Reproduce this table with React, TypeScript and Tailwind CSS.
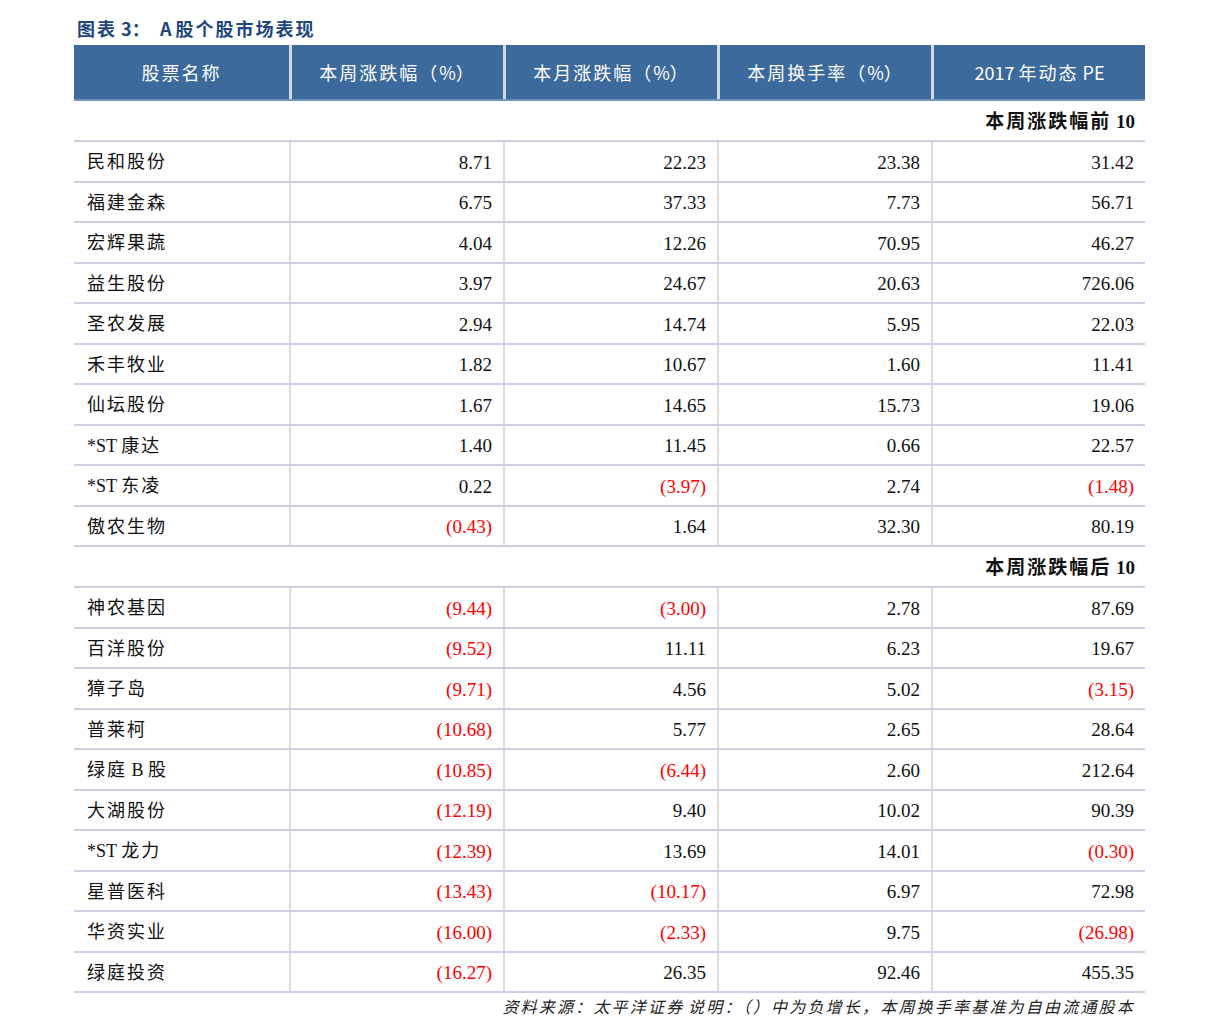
const top10 = [
  ['民和股份', '8.71', '22.23', '23.38', '31.42'],
  ['福建金森', '6.75', '37.33', '7.73', '56.71'],
  ['宏辉果蔬', '4.04', '12.26', '70.95', '46.27'],
  ['益生股份', '3.97', '24.67', '20.63', '726.06'],
  ['圣农发展', '2.94', '14.74', '5.95', '22.03'],
  ['禾丰牧业', '1.82', '10.67', '1.60', '11.41'],
  ['仙坛股份', '1.67', '14.65', '15.73', '19.06'],
  ['*ST 康达', '1.40', '11.45', '0.66', '22.57'],
  ['*ST 东凌', '0.22', '(3.97)', '2.74', '(1.48)'],
  ['傲农生物', '(0.43)', '1.64', '32.30', '80.19'],
]

const bottom10 = [
  ['神农基因', '(9.44)', '(3.00)', '2.78', '87.69'],
  ['百洋股份', '(9.52)', '11.11', '6.23', '19.67'],
  ['獐子岛', '(9.71)', '4.56', '5.02', '(3.15)'],
  ['普莱柯', '(10.68)', '5.77', '2.65', '28.64'],
  ['绿庭 B 股', '(10.85)', '(6.44)', '2.60', '212.64'],
  ['大湖股份', '(12.19)', '9.40', '10.02', '90.39'],
  ['*ST 龙力', '(12.39)', '13.69', '14.01', '(0.30)'],
  ['星普医科', '(13.43)', '(10.17)', '6.97', '72.98'],
  ['华资实业', '(16.00)', '(2.33)', '9.75', '(26.98)'],
  ['绿庭投资', '(16.27)', '26.35', '92.46', '455.35'],
]

const headers = ['股票名称', '本周涨跌幅（%）', '本月涨跌幅（%）', '本周换手率（%）', '2017 年动态 PE']

const serif = "font-['Liberation_Serif','Noto_Sans_CJK_SC',serif]"

// spread out only the CJK characters, latin stays tight
function Cjk({ text, spacing }: { text: string; spacing: string }) {
  const parts = text.split(/([\u3000-\u9fff\uff00-\uffef]+)/)
  return (
    <>
      {parts.map((p, i) =>
        /[\u3000-\u9fff\uff00-\uffef]/.test(p) ? (
          <span key={i} className={spacing}>
            {p}
          </span>
        ) : (
          <span key={i}>{p}</span>
        )
      )}
    </>
  )
}

function Row({ row }: { row: string[] }) {
  return (
    <div className="grid grid-cols-[215px_214px_214px_214px_214px] h-[40.5px] border-b-2 border-[#cbcfe3]">
      {row.map((cell, i) =>
        i === 0 ? (
          <div key={i} className={`flex items-center pl-[13px] pt-[3px] text-[18px] text-[#111] whitespace-pre ${serif}`}>
            <Cjk text={cell} spacing="tracking-[2px]" />
          </div>
        ) : (
          <div
            key={i}
            className={`flex items-center justify-end pr-[11px] pt-[3px] border-l-2 border-[#dcdcdc] text-[19px] ${serif} ${
              cell.startsWith('(') ? 'text-[#ff0000]' : 'text-[#111]'
            }`}
          >
            {cell}
          </div>
        )
      )}
    </div>
  )
}

function Section({ label }: { label: string }) {
  return (
    <div className="h-[41px] flex items-center justify-end pr-[10px] pt-[3px] border-b-2 border-[#cbcfe3]">
      <span className={`text-[19px] font-bold text-[#111] whitespace-pre ${serif}`}>
        <Cjk text={label} spacing="tracking-[2px]" />
      </span>
    </div>
  )
}

export default function App() {
  return (
    <div className="w-[1225px] h-[1034px] bg-white overflow-hidden font-['Noto_Sans_CJK_SC',sans-serif]">
      <div className="pl-[74px] w-[1145px]">
        <div className="h-[45px] flex items-center pl-[3px] pt-[12px]">
          <span className="text-[18px] font-bold text-[#21467c] whitespace-pre">
            <Cjk text="图表 3：  A 股个股市场表现" spacing="tracking-[2px]" />
          </span>
        </div>

        <div className="grid grid-cols-[215px_214px_214px_214px_214px] h-[56px] bg-[#3d6a9c] border-b-2 border-[#6f93c0]">
          {headers.map((h, i) => (
            <div
              key={i}
              className={`flex items-center justify-center text-[18px] text-white whitespace-pre ${
                i > 0 ? 'border-l-[3px] border-[#d3d7df]' : ''
              }`}
            >
              <Cjk text={h} spacing="tracking-[2px]" />
            </div>
          ))}
        </div>

        <Section label="本周涨跌幅前 10" />
        {top10.map((r, i) => (
          <Row key={i} row={r} />
        ))}
        <Section label="本周涨跌幅后 10" />
        {bottom10.map((r, i) => (
          <Row key={i} row={r} />
        ))}

        <div className="flex justify-end pr-[10px] pt-[1px]">
          <span className="text-[16px] italic text-[#222] whitespace-pre">
            <Cjk text="资料来源：太平洋证券 说明：（）中为负增长，本周换手率基准为自由流通股本" spacing="tracking-[2.2px]" />
          </span>
        </div>
      </div>
    </div>
  )
}
